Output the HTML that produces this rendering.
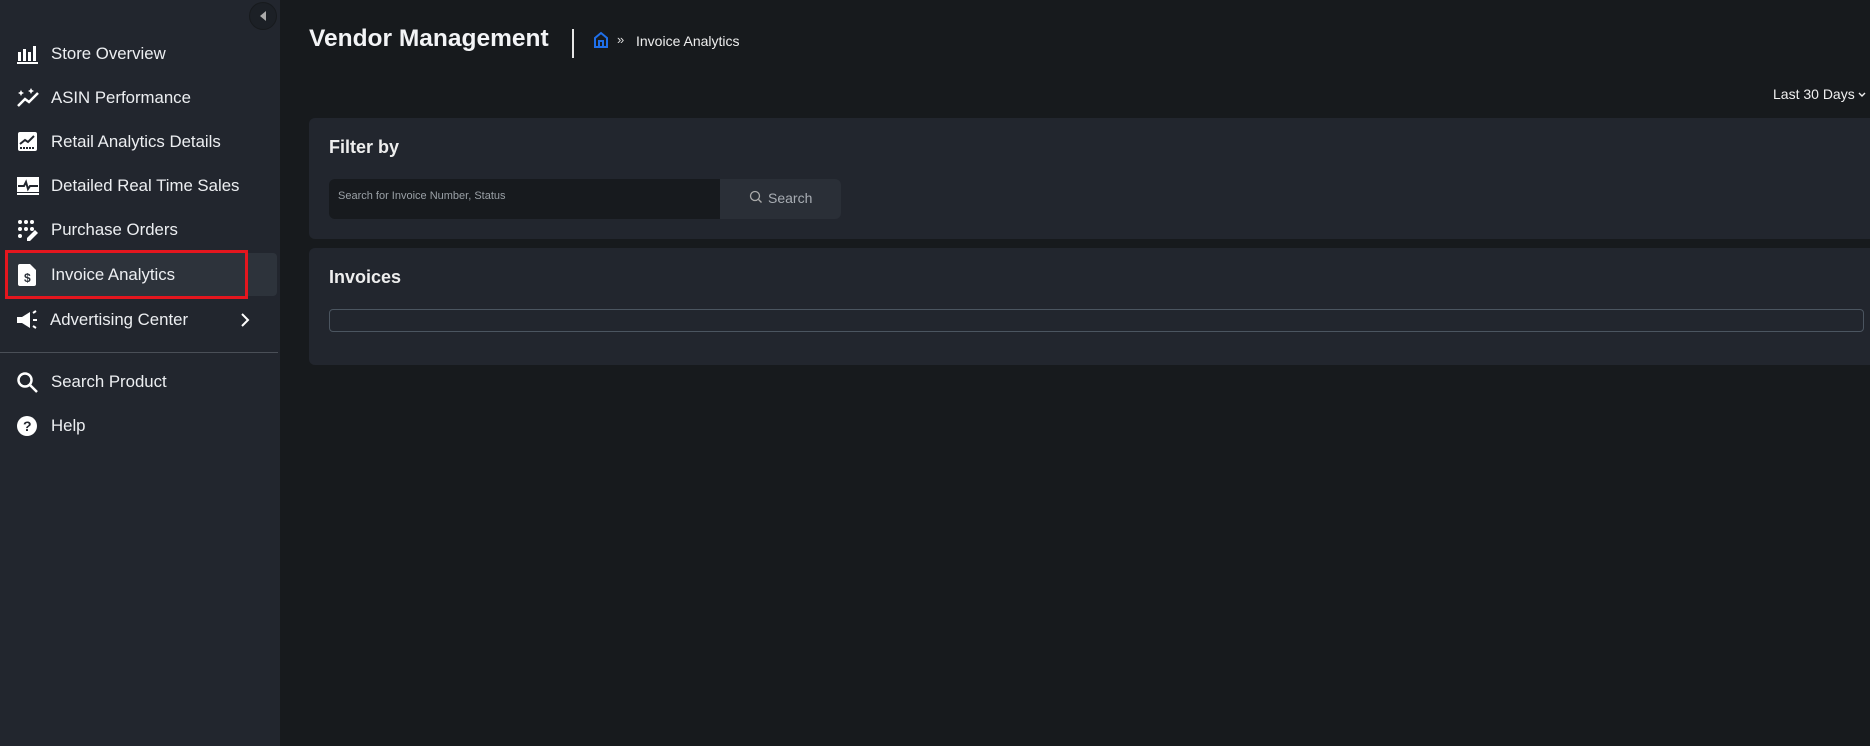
<!DOCTYPE html>
<html><head><meta charset="utf-8"><style>
*{margin:0;padding:0;box-sizing:border-box}
body{width:1870px;height:746px;background:#171a1d;font-family:"Liberation Sans",sans-serif;color:#fff;position:relative;overflow:hidden}
.sb{position:absolute;left:0;top:0;width:280px;height:746px;background:#22262e}
.it{position:absolute;left:0;height:44px;width:280px;display:flex;align-items:center;font-size:16.8px;color:#eceef1}
.it svg{position:absolute;left:16px}
.it span{position:absolute;left:51px}
.abs{position:absolute}
</style></head><body>
<div class="sb">
 <div class="abs" style="left:249px;top:2px;width:28px;height:28px;border-radius:50%;background:#1c2026;border:1px solid #171a1d"></div>
 <div class="abs" style="left:260px;top:11px;width:0;height:0;border-top:5px solid transparent;border-bottom:5px solid transparent;border-right:6px solid #aaa"></div>
 <div class="it" style="top:32px"><svg width="24" height="22" viewBox="0 0 24 22"><rect x="2" y="9" width="3" height="9" fill="#fff"/><rect x="7" y="6" width="3" height="12" fill="#fff"/><rect x="12" y="9" width="3" height="9" fill="#fff"/><rect x="17" y="3" width="3" height="15" fill="#fff"/><rect x="1" y="19" width="21" height="2" fill="#fff"/></svg><span>Store Overview</span></div>
 <div class="it" style="top:76px"><svg width="24" height="22" viewBox="0 0 24 22"><path d="M2 19 L9 12 L13 15 L22 6" stroke="#fff" stroke-width="2.5" fill="none"/><path d="M5 3 l1 2 2 1 -2 1 -1 2 -1-2 -2-1 2-1z M15 1 l1 2 2 1-2 1-1 2-1-2-2-1 2-1z" fill="#fff"/></svg><span>ASIN Performance</span></div>
 <div class="it" style="top:120px"><svg width="24" height="22" viewBox="0 0 24 22"><rect x="2" y="1" width="19" height="19" rx="2" fill="#fff"/><path d="M4 13 L9 9 L12 11 L18 5" stroke="#22262e" stroke-width="2" fill="none"/><path d="M4 17 h15" stroke="#22262e" stroke-width="2" stroke-dasharray="2 1"/></svg><span>Retail Analytics Details</span></div>
 <div class="it" style="top:164px"><svg width="24" height="22" viewBox="0 0 24 22"><rect x="1" y="2" width="22" height="15" fill="#fff"/><path d="M2 11 h6 l2-4 2 7 2-3 h8" stroke="#22262e" stroke-width="2" fill="none"/><rect x="1" y="18" width="22" height="2" fill="#fff"/></svg><span>Detailed Real Time Sales</span></div>
 <div class="it" style="top:208px"><svg width="24" height="22" viewBox="0 0 24 22" fill="#fff"><circle cx="4" cy="3" r="2"/><circle cx="10" cy="3" r="2"/><circle cx="16" cy="3" r="2"/><circle cx="4" cy="10" r="2"/><circle cx="10" cy="10" r="2"/><circle cx="16" cy="10" r="2"/><circle cx="4" cy="17" r="2"/><path d="M11 19 l8-8 3 3-8 8h-3z"/></svg><span>Purchase Orders</span></div>
 <div class="abs" style="left:5px;top:253px;width:272px;height:43px;background:#2d333b;border-radius:4px"></div>
 <div class="abs" style="left:5px;top:250px;width:243px;height:49px;border:3px solid #e4161e"></div>
 <div class="it" style="top:253px"><svg width="24" height="22" viewBox="0 0 24 22"><path d="M4 0 h10 l6 6 v14 a2 2 0 0 1-2 2 h-14 a2 2 0 0 1-2-2 v-18 a2 2 0 0 1 2-2z" fill="#fff"/><text x="8" y="18" font-size="12" font-weight="bold" fill="#2d333b" font-family="Liberation Sans">$</text></svg><span>Invoice Analytics</span></div>
 <div class="it" style="top:298px"><svg width="24" height="22" viewBox="0 0 24 22" fill="#fff"><path d="M1 8 h5 l8-5 v16 l-8-5 h-5z"/><path d="M17 4 l3-2 M17 11 h4 M17 17 l3 2" stroke="#fff" stroke-width="2"/></svg><span style="left:50px">Advertising Center</span><svg style="left:240px" width="10" height="16" viewBox="0 0 10 16"><path d="M2 2 l6 6-6 6" stroke="#fff" stroke-width="2" fill="none"/></svg></div>
 <div class="abs" style="left:0;top:352px;width:278px;height:1px;background:#4a4f57"></div>
 <div class="it" style="top:360px"><svg width="24" height="22" viewBox="0 0 24 22"><circle cx="9" cy="9" r="6.5" stroke="#fff" stroke-width="2.5" fill="none"/><path d="M14 14 l7 7" stroke="#fff" stroke-width="2.5"/></svg><span>Search Product</span></div>
 <div class="it" style="top:404px"><svg width="24" height="22" viewBox="0 0 24 22"><circle cx="11" cy="11" r="10" fill="#fff"/><text x="7" y="16" font-size="14" font-weight="bold" fill="#22262e" font-family="Liberation Sans">?</text></svg><span>Help</span></div>
</div>
<div class="abs" style="left:309px;top:25px;font-size:24.5px;font-weight:bold;color:#f3f4f6;white-space:nowrap">Vendor Management</div>
<div class="abs" style="left:572px;top:29px;width:2px;height:29px;background:#e5e5e5"></div>
<svg class="abs" style="left:593px;top:31px" width="16" height="18" viewBox="0 0 16 18"><path d="M2 16 V7 L8 2 L14 7 V16 Z M6 16 V10 h4 v6" stroke="#1f6fe8" stroke-width="2" fill="none"/></svg>
<div class="abs" style="left:617px;top:32px;font-size:13px;color:#ddd">»</div>
<div class="abs" style="left:636px;top:33px;font-size:14px;color:#eee;white-space:nowrap">Invoice Analytics</div>
<div class="abs" style="left:1773px;top:86px;font-size:14px;color:#f0f0f0;white-space:nowrap">Last 30 Days</div>
<svg class="abs" style="left:1858px;top:92px" width="8" height="6" viewBox="0 0 8 6"><path d="M1 1 l3 3 3-3" stroke="#eee" stroke-width="1.4" fill="none"/></svg>
<div class="abs" style="left:309px;top:118px;width:1561px;height:121px;background:#22262e;border-radius:6px 0 0 6px"></div>
<div class="abs" style="left:329px;top:137px;font-size:18px;font-weight:bold;color:#eee">Filter by</div>
<div class="abs" style="left:329px;top:179px;width:391px;height:40px;background:#171a1e;border-radius:6px 0 0 6px"></div>
<div class="abs" style="left:338px;top:190px;font-size:11px;color:#9aa0a6">Search for Invoice Number, Status</div>
<div class="abs" style="left:720px;top:179px;width:121px;height:40px;background:#2a2f37;border-radius:0 6px 6px 0"></div>
<svg class="abs" style="left:749px;top:190px" width="14" height="14" viewBox="0 0 14 14"><circle cx="6" cy="6" r="4.5" stroke="#aaa" stroke-width="1.3" fill="none"/><path d="M9.5 9.5 l3 3" stroke="#aaa" stroke-width="1.3"/></svg>
<div class="abs" style="left:768px;top:190px;font-size:14px;color:#a8adb3">Search</div>
<div class="abs" style="left:309px;top:248px;width:1561px;height:117px;background:#22262e;border-radius:6px 0 0 6px"></div>
<div class="abs" style="left:329px;top:267px;font-size:18px;font-weight:bold;color:#eee">Invoices</div>
<div class="abs" style="left:329px;top:309px;width:1535px;height:23px;border:1px solid #4b5560;border-radius:4px"></div>
</body></html>
